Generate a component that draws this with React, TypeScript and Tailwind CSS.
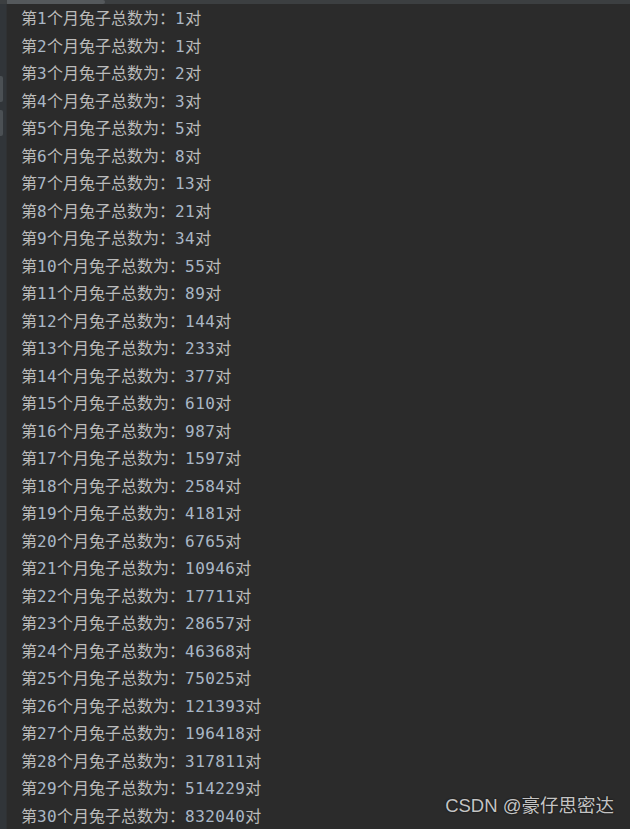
import React from 'react';

const fib: number[] = [];
for (let i = 0; i < 30; i++) {
  fib.push(i < 2 ? 1 : fib[i - 1] + fib[i - 2]);
}

const Row: React.FC<{ month: number; total: number }> = ({ month, total }) => (
  <div className="h-[27.5px] leading-[27.5px] whitespace-nowrap text-[16px] text-[#bbbbbb] font-['Noto_Sans_CJK_SC',sans-serif]">
    第
    <span className="font-['DejaVu_Sans_Mono',monospace] text-[#a9b7c6] tracking-[0.4px]">{month}</span>
    个月兔子总数为：
    <span className="font-['DejaVu_Sans_Mono',monospace] text-[#a9b7c6] tracking-[0.4px]">{total}</span>
    对
  </div>
);

const App: React.FC = () => {
  return (
    <div className="relative w-[630px] h-[829px] overflow-hidden bg-[#2b2b2b] flex flex-col">
      {/* top strip with scrollbar thumb */}
      <div className="h-[4px] bg-[#3c3f41] flex shrink-0">
        <div className="w-[7px]" />
        <div className="w-[98px] bg-[#55595c] rounded-r-sm" />
      </div>

      <div className="flex flex-1 min-h-0">
        {/* left gutter */}
        <div className="w-[7px] bg-[#313539] border-r border-[#2f3133] flex flex-col shrink-0">
          <div className="h-[72px]" />
          <div className="h-[26px] w-[3px] bg-[#4b5054] rounded-r-[2px]" />
          <div className="h-[8px]" />
          <div className="h-[26px] w-[3px] bg-[#4b5054] rounded-r-[2px]" />
        </div>

        {/* console output */}
        <div className="flex flex-col pl-[14px]">
          {fib.map((n, i) => (
            <Row key={i} month={i + 1} total={n} />
          ))}
        </div>
      </div>

      {/* watermark */}
      <div className="absolute right-[16px] bottom-[9px] text-[18.5px] text-[#c4c4c4] font-['Liberation_Sans','Noto_Sans_CJK_SC',sans-serif] [text-shadow:0_0_2px_rgba(0,0,0,0.8)]">
        CSDN @豪仔思密达
      </div>
    </div>
  );
};

export default App;
